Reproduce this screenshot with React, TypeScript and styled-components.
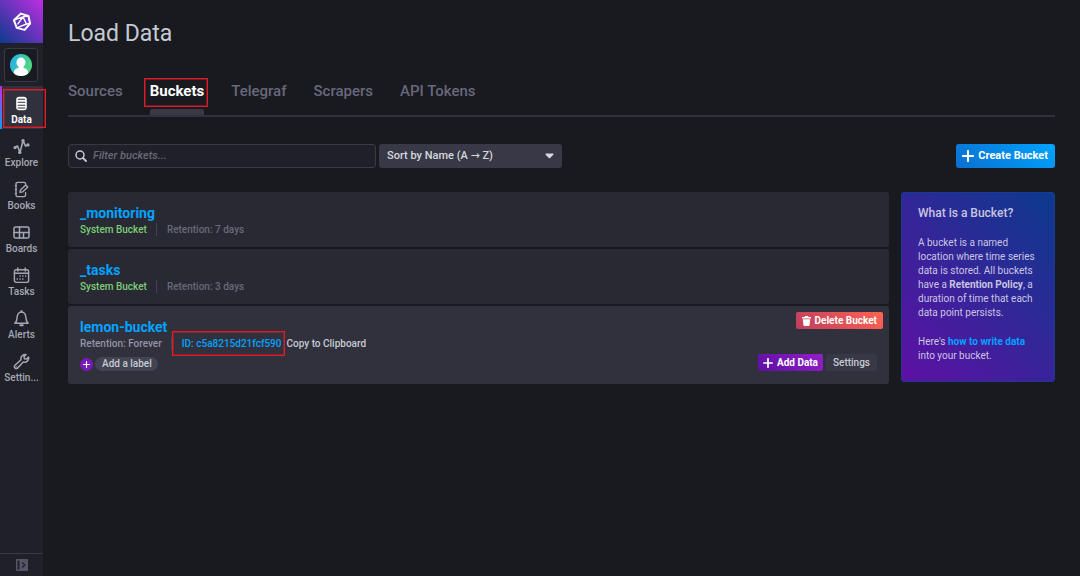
import React from "react";
import styled, { createGlobalStyle, css } from "styled-components";

const font = `Roboto, "Liberation Sans", sans-serif`;

const GlobalStyle = createGlobalStyle`
  * { box-sizing: border-box; }
  body { margin: 0; background: #191920; color: #c6cad3; font: 500 10px/14px ${font}; }
  button, input, select { font: inherit; color: inherit; margin: 0; }
  h1, h2, h3, p, ul { margin: 0; padding: 0; font-weight: inherit; }
  ul { list-style: none; }
  a { color: inherit; text-decoration: none; }
  svg { display: block; flex: none; }
`;

const Page = styled.div`
  display: flex;
  min-height: 100vh;
`;

const Sidebar = styled.nav`
  display: flex;
  flex-direction: column;
  flex: none;
  width: 43px;
  background: #202028;
`;

const LogoLink = styled.a`
  display: grid;
  place-items: center;
  height: 43px;
  background: linear-gradient(45deg, #0b3a8d, #be2ee4);
`;

const AvatarButton = styled.button`
  display: grid;
  place-items: center;
  width: 34px;
  height: 34px;
  margin: 5px 4px 4px;
  padding: 0;
  background: #1a1a21;
  border: 1px solid #383846;
  border-radius: 3px;
`;

const NavItem = styled.a<{ $active?: boolean }>`
  position: relative;
  display: flex;
  flex-direction: column;
  align-items: center;
  gap: 1px;
  height: 43px;
  padding-top: 9px;
  color: #a4a8b6;
  font-weight: 500;
  ${(p) =>
    p.$active &&
    css`
      color: #fff;
      font-weight: 700;
      background: #31313d;
      &::before {
        content: "";
        position: absolute;
        inset: 0 auto 0 0;
        width: 2px;
        background: linear-gradient(#be2ee4, #00a3ff);
      }
    `}
`;

const NavLabel = styled.span`
  max-width: 100%;
  line-height: 13px;
  white-space: nowrap;
`;

const CollapseButton = styled.button`
  display: grid;
  place-items: center;
  height: 23px;
  margin-top: auto;
  padding: 0;
  color: #545667;
  background: none;
  border: 0;
  border-top: 1px solid #383846;
`;

const Highlight = styled.span`
  position: absolute;
  border: 1px solid #e01b24;
  outline: 1px solid #e01b2470;
  outline-offset: -2px;
  pointer-events: none;
`;

const NavHighlight = styled(Highlight)`
  inset: 3px -3px 1px 3px;
`;

const Main = styled.main`
  flex: 1;
  min-width: 0;
  padding: 19px 25px 24px;
`;

const Title = styled.h1`
  font-size: 23px;
  line-height: 30px;
  font-weight: 400;
`;

const Tabs = styled.div`
  display: flex;
  gap: 27px;
  margin-top: 31px;
  border-bottom: 2px solid #31313d;
`;

const Tab = styled.a<{ $active?: boolean }>`
  position: relative;
  height: 35px;
  padding-top: 1px;
  font-size: 15px;
  line-height: 20px;
  color: #68687b;
  border-bottom: 6px solid transparent;
  ${(p) =>
    p.$active &&
    css`
      color: #fff;
      font-weight: 700;
      &::after {
        content: "";
        position: absolute;
        inset: auto 0 -6px;
        height: 6px;
        background: #383846;
        border-radius: 2px 2px 0 0;
      }
    `}
`;

const TabHighlight = styled(Highlight)`
  inset: -2px -4px 2px -6px;
`;

const Toolbar = styled.div`
  display: flex;
  gap: 3px;
  margin: 27px 0 24px;
`;

const SearchField = styled.label`
  display: flex;
  align-items: center;
  gap: 6px;
  max-width: 308px;
  flex: 1 1 308px;
  height: 24px;
  padding: 0 6px;
  background: #202028;
  border: 1px solid #383846;
  border-radius: 3px;
`;

const SearchInput = styled.input`
  flex: 1;
  min-width: 0;
  padding: 0;
  font-size: 11px;
  background: none;
  border: 0;
  outline: 0;
  &::placeholder {
    color: #68687b;
    font-style: italic;
    opacity: 1;
  }
`;

const SelectWrap = styled.div`
  position: relative;
  flex: 0 1 183px;
  svg {
    position: absolute;
    top: 9px;
    right: 8px;
    pointer-events: none;
  }
`;

const SortSelect = styled.select`
  appearance: none;
  display: block;
  width: 100%;
  height: 24px;
  padding: 0 24px 1px 8px;
  font-size: 11px;
  font-family: Roboto, "Noto Sans", "DejaVu Sans", sans-serif;
  color: #d5d8df;
  background: #383846;
  border: 0;
  border-radius: 3px;
`;

const Button = styled.button<{ $kind: "primary" | "danger" | "purple" | "plain" }>`
  display: inline-flex;
  align-items: center;
  justify-content: center;
  gap: 4px;
  height: 17px;
  padding: 0 6px;
  font-size: 10px;
  font-weight: 700;
  color: #fff;
  white-space: nowrap;
  border: 0;
  border-radius: 2px;
  background: ${(p) =>
    ({
      primary: "linear-gradient(45deg, #0a70cf, #00a3ff)",
      danger: "linear-gradient(45deg, #bf3d5e, #ff6351)",
      purple: "linear-gradient(45deg, #5c10a0, #931fc8)",
      plain: "#383846",
    })[p.$kind]};
  ${(p) =>
    p.$kind === "primary" &&
    css`
      height: 24px;
      margin-left: auto;
      padding: 0 7px 1px 6px;
      font-size: 11px;
      border-radius: 3px;
    `}
  ${(p) =>
    p.$kind === "purple" &&
    css`
      padding: 0 5px;
    `}
  ${(p) =>
    p.$kind === "plain" &&
    css`
      padding: 0 7px;
      color: #c6cad3;
      font-weight: 500;
    `}
`;

const Columns = styled.div`
  display: flex;
  align-items: flex-start;
  gap: 12px;
`;

const BucketList = styled.ul`
  display: grid;
  gap: 2px;
  flex: 1;
  min-width: 0;
`;

const BucketCard = styled.li<{ $hovered?: boolean }>`
  display: flex;
  justify-content: space-between;
  padding: ${(p) => (p.$hovered ? "11px 12px 13px" : "11px 12px")};
  background: ${(p) => (p.$hovered ? "#31313d" : "#292933")};
  border-radius: 3px;
`;

const BucketName = styled.a`
  display: block;
  width: fit-content;
  font-size: 14px;
  line-height: 20px;
  font-weight: 700;
  color: #00a3ff;
`;

const Meta = styled.div<{ $bright?: boolean }>`
  display: flex;
  align-items: center;
  height: 13px;
  line-height: 13px;
  color: ${(p) => (p.$bright ? "#9394a5" : "#68687b")};
  > * + * {
    margin-left: 9px;
    padding-left: 10px;
    border-left: 1px solid #434453;
  }
`;

const SystemTag = styled.span`
  color: #7ccd76;
`;

const BucketId = styled.span`
  position: relative;
  color: #00a3ff;
`;

const IdHighlight = styled(Highlight)`
  inset: -6px -4px -6px 0;
`;

const CopyButton = styled.button`
  && {
    margin-left: 5px;
    padding: 0;
    border: 0;
  }
  color: #c6cad3;
  background: none;
`;

const Labels = styled.div`
  display: flex;
  align-items: center;
  gap: 2px;
  height: 14px;
  margin-top: 7px;
`;

const AddLabelIcon = styled.button`
  display: grid;
  place-items: center;
  width: 13px;
  height: 13px;
  padding: 0;
  color: #fff;
  background: #7a18b8;
  border: 0;
  border-radius: 50%;
`;

const LabelPill = styled.span`
  padding: 0 6px 0 7px;
  line-height: 14px;
  background: #434453;
  border-radius: 7px;
`;

const CardActions = styled.div`
  display: flex;
  flex-direction: column;
  align-items: flex-end;
  justify-content: space-between;
  margin: -5px -6px 0 0;
`;

const ActionRow = styled.div`
  display: flex;
  gap: 3px;
  margin-right: 6px;
`;

const InfoPanel = styled.aside`
  flex: 0 1 154px;
  padding: 12px 15px 18px 16px;
  color: #c9c5e2;
  font-weight: 400;
  background: linear-gradient(45deg, #5e10a4, #0b3a8d);
  border: 1px solid #1b3a92;
  border-radius: 3px;
  p {
    margin-top: 15px;
    line-height: 14px;
  }
  b {
    font-weight: 700;
  }
  a {
    color: #00a3ff;
    font-weight: 700;
  }
`;

const InfoTitle = styled.h2`
  font-size: 12px;
  line-height: 16px;
  font-weight: 500;
`;

const Stroke = ({ children }: { children: React.ReactNode }) => (
  <svg width="17" height="17" viewBox="0 0 17 17" fill="none" stroke="currentColor" strokeWidth="1.4" strokeLinecap="round" strokeLinejoin="round" aria-hidden="true">
    {children}
  </svg>
);

const icons = {
  data: (
    <Stroke>
      <rect x="3.2" y="1.7" width="10.6" height="13.6" rx="3" fill="currentColor" stroke="none" />
      <path d="M5.5 4.3h6M5.2 7.3h6.600M5.2 10.200h6.600M5.2 13h6.600" stroke="#31313d" strokeWidth="1.1" />
    </Stroke>
  ),
  explore: (
    <Stroke>
      <path d="M2 9.5L4.5 8l2.5 6.5L10 2.7l2.6 5.4L15 6.5" strokeWidth="1.6" />
      <g fill="currentColor" stroke="none">
        <circle cx="2" cy="9.6" r="1.6" />
        <circle cx="6.8" cy="14.4" r="1.7" />
        <circle cx="10" cy="2.6" r="1.7" />
        <circle cx="15" cy="6.9" r="1.6" />
      </g>
    </Stroke>
  ),
  books: (
    <Stroke>
      <path d="M12.6 3.3V3A1.6 1.6 0 0 0 11 1.400H4.6A1.6 1.6 0 0 0 3 3v11a1.6 1.6 0 0 0 1.6 1.6H11a1.6 1.6 0 0 0 1.6-1.6v-2.2M2.4 4.5h1M2.4 8.5h1M2.4 12.5h1" />
      <path d="M7 11.3l.5-2.4 5.3-5 2 2-5.2 5z" />
    </Stroke>
  ),
  boards: (
    <Stroke>
      <rect x="1" y="3" width="15" height="11" rx="1.6" strokeWidth="1.5" />
      <path d="M1 8.5h15M6.5 3v5.5M10.5 8.5V14M6.5 8.5V14" strokeWidth="1.5" />
    </Stroke>
  ),
  tasks: (
    <Stroke>
      <rect x="1.4" y="2.8" width="14.2" height="12.6" rx="1.8" />
      <path d="M1.4 6.3h14.2M4.8 1v3M12.2 1v3" />
      <path d="M7 9h.1M9.8 9h.1M12.6 9h.1M4.2 12h.1M7 12h.1M9.8 12h.1" strokeWidth="1.6" />
    </Stroke>
  ),
  alerts: (
    <Stroke>
      <path d="M1.8 13.2c1.8-1 1.9-2.7 2.2-5.2C4.3 4.2 5.8 2 8.5 2s4.2 2.2 4.5 6c.3 2.5.4 4.2 2.2 5.2z" />
      <path d="M8.5 1v1M7.3 15.3h2.4" strokeWidth="2" />
    </Stroke>
  ),
  settings: (
    <Stroke>
      <path d="M9.7 2.3a4 4 0 0 1 3.2-.8L11 3.8l.4 1.9 1.9.4 2.2-2a4 4 0 0 1-5.3 4.8l-5.5 6a1.8 1.8 0 0 1-2.7-2.7l6-5.5a4 4 0 0 1 1.7-4.4z" strokeWidth="1.5" />
      <circle cx="3.6" cy="13.4" r=".5" fill="currentColor" stroke="none" />
    </Stroke>
  ),
};

const Plus = ({ size = 10 }: { size?: number }) => (
  <svg width={size} height={size} viewBox="0 0 10 10" stroke="currentColor" strokeWidth="1.7" strokeLinecap="round" aria-hidden="true">
    <path d="M5 .8v8.4M.8 5h8.4" />
  </svg>
);

const navItems: { label: string; icon: keyof typeof icons; active?: boolean }[] = [
  { label: "Data", icon: "data", active: true },
  { label: "Explore", icon: "explore" },
  { label: "Books", icon: "books" },
  { label: "Boards", icon: "boards" },
  { label: "Tasks", icon: "tasks" },
  { label: "Alerts", icon: "alerts" },
  { label: "Settin...", icon: "settings" },
];

const tabs = ["Sources", "Buckets", "Telegraf", "Scrapers", "API Tokens"];

const systemBuckets = [
  { name: "_monitoring", retention: "7 days" },
  { name: "_tasks", retention: "3 days" },
];

export default function App() {
  return (
    <Page>
      <GlobalStyle />
      <Sidebar>
        <LogoLink href="#" aria-label="Home">
          <svg width="20" height="20" viewBox="0 0 20 20" fill="none" stroke="#fff" strokeWidth="2" strokeLinejoin="round">
            <path d="M8.8 1.6L16.4 4l1.7 7.5-5.5 6.4-7.8-2L1.900 8.200z" />
            <path d="M1.900 8.200l9-3.400M10.900 4.800l3.600 7.200M4.800 15.900l9.700-3.900M5.600 12.400L10.900 4.800M10.900 4.800l5.500-.8M14.500 12l3.600-.5" strokeWidth="1.4" />
          </svg>
        </LogoLink>
        <AvatarButton aria-label="Account">
          <svg width="22" height="22" viewBox="0 0 22 22">
            <defs>
              <linearGradient id="avatar" x1="0" y1="0" x2="1" y2="0.3">
                <stop offset="0" stopColor="#22adf6" />
                <stop offset="1" stopColor="#4ed880" />
              </linearGradient>
              <clipPath id="round">
                <circle cx="11" cy="11" r="11" />
              </clipPath>
            </defs>
            <circle cx="11" cy="11" r="11" fill="url(#avatar)" />
            <g clipPath="url(#round)" fill="#fff">
              <ellipse cx="11" cy="8.5" rx="4.5" ry="5" />
              <path d="M8.5 12h5v2c3 .6 4.500 2 5 5v4h-15v-4c.5-3 2-4.400 5-5z" />
            </g>
          </svg>
        </AvatarButton>
        {navItems.map((item) => (
          <NavItem key={item.label} href="#" $active={item.active}>
            {icons[item.icon]}
            <NavLabel>{item.label}</NavLabel>
            {item.active && <NavHighlight />}
          </NavItem>
        ))}
        <CollapseButton aria-label="Expand navigation">
          <svg width="12" height="12" viewBox="0 0 12 12">
            <rect width="12" height="12" rx="1" fill="#545667" />
            <path d="M1.5 1.5h2v9h-2z" fill="#202028" />
            <path d="M6.3 3.5L8.8 6 6.3 8.5" fill="none" stroke="#202028" strokeWidth="1.3" />
          </svg>
        </CollapseButton>
      </Sidebar>

      <Main>
        <Title>Load Data</Title>
        <Tabs>
          {tabs.map((tab) => (
            <Tab key={tab} href="#" $active={tab === "Buckets"}>
              {tab}
              {tab === "Buckets" && <TabHighlight />}
            </Tab>
          ))}
        </Tabs>

        <Toolbar>
          <SearchField>
            <svg width="12" height="12" viewBox="0 0 12 12" fill="none" stroke="#c6cad3" strokeWidth="1.5" strokeLinecap="round">
              <circle cx="5" cy="5" r="4" />
              <path d="M8 8l3 3" strokeWidth="1.8" />
            </svg>
            <SearchInput aria-label="Filter buckets" placeholder="Filter buckets..." />
          </SearchField>
          <SelectWrap>
            <SortSelect aria-label="Sort buckets">
              <option>Sort by Name (A → Z)</option>
            </SortSelect>
            <svg width="9" height="6" viewBox="0 0 9 6" fill="#d5d8df">
              <path d="M1 .5h7q1 .3.3 1.2L5.2 5q-.7.7-1.4 0L.7 1.7Q0 .8 1 .5z" />
            </svg>
          </SelectWrap>
          <Button $kind="primary">
            <Plus size={12} />
            Create Bucket
          </Button>
        </Toolbar>

        <Columns>
          <BucketList>
            {systemBuckets.map((bucket) => (
              <BucketCard key={bucket.name}>
                <div>
                  <BucketName href="#">{bucket.name}</BucketName>
                  <Meta>
                    <SystemTag>System Bucket</SystemTag>
                    <span>Retention: {bucket.retention}</span>
                  </Meta>
                </div>
              </BucketCard>
            ))}
            <BucketCard $hovered>
              <div>
                <BucketName href="#">lemon-bucket</BucketName>
                <Meta $bright>
                  <span>Retention: Forever</span>
                  <BucketId>
                    ID: c5a8215d21fcf590
                    <IdHighlight />
                  </BucketId>
                  <CopyButton>Copy to Clipboard</CopyButton>
                </Meta>
                <Labels>
                  <AddLabelIcon aria-label="Add a label">
                    <Plus size={7} />
                  </AddLabelIcon>
                  <LabelPill>Add a label</LabelPill>
                </Labels>
              </div>
              <CardActions>
                <Button $kind="danger">
                  <svg width="9" height="10" viewBox="0 0 9 10" fill="#fff">
                    <path d="M3 0h3l.5 1H9v1.5H0V1h2.5zM.8 3.2h7.4L7.6 9q-.1 1-1 1H2.4q-.9 0-1-1z" />
                  </svg>
                  Delete Bucket
                </Button>
                <ActionRow>
                  <Button $kind="purple">
                    <Plus />
                    Add Data
                  </Button>
                  <Button $kind="plain">Settings</Button>
                </ActionRow>
              </CardActions>
            </BucketCard>
          </BucketList>

          <InfoPanel>
            <InfoTitle>What is a Bucket?</InfoTitle>
            <p>
              A bucket is a named location where time series data is stored. All buckets have a <b>Retention Policy</b>, a
              duration of time that each data point persists.
            </p>
            <p>
              Here's <a href="#">how to write data</a> into your bucket.
            </p>
          </InfoPanel>
        </Columns>
      </Main>
    </Page>
  );
}
